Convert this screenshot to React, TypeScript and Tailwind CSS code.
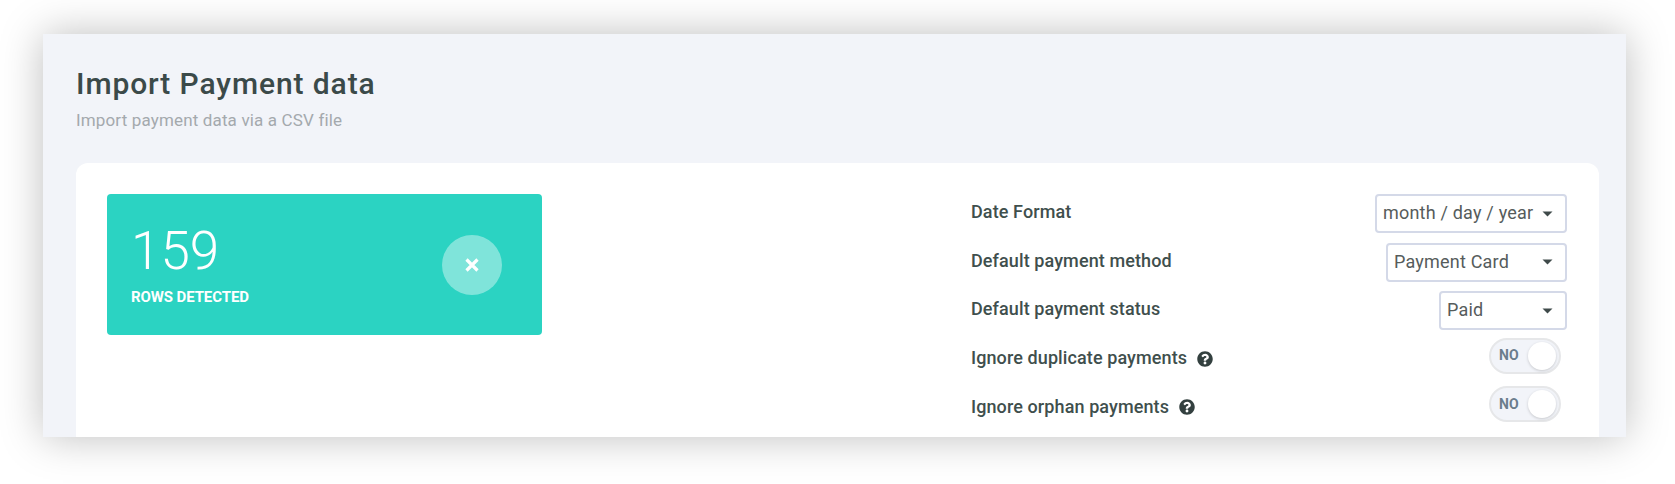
import React from "react";
import { FaQuestionCircle } from "react-icons/fa";

function Caret() {
  return (
    <svg width="11" height="6" viewBox="0 0 11 6" className="shrink-0">
      <path d="M0.5 0.5h10L5.5 5.5z" fill="#3f4a4a" />
    </svg>
  );
}

function Select({ label, width }: { label: string; width: string }) {
  return (
    <div className={`flex h-[39px] items-center justify-between rounded-[4px] border-2 border-[#d4d9e8] bg-white pl-[6px] pr-[12px] text-[18px] tracking-[0.2px] text-[#565c5c] ${width}`}>
      <span className="relative top-[-1px]">{label}</span>
      <Caret />
    </div>
  );
}

function Toggle() {
  return (
    <div className="mb-[8px] mr-[6px] flex h-[36px] w-[72px] items-center justify-between rounded-full border-2 border-[#e6e7e9] bg-[#f2f4f9] pl-[8px] pr-[3px]">
      <span className="text-[14px] font-bold text-[#6b7d8c]">NO</span>
      <span className="h-[28px] w-[28px] rounded-full bg-white shadow-[0_1px_3px_rgba(0,0,0,0.18)]" />
    </div>
  );
}

function Row({ label, help, children }: { label: string; help?: boolean; children: React.ReactNode }) {
  return (
    <div className="flex h-[39px] items-center justify-between">
      <div className="flex items-center gap-[10px] text-[18px] font-medium tracking-[0.1px] text-[#3f4f4d]">
        <span className="relative top-[-2px]">{label}</span>
        {help && <FaQuestionCircle className="relative top-[-1px] h-[16px] w-[16px] text-[#33403f]" />}
      </div>
      {children}
    </div>
  );
}

export default function App() {
  return (
    <div className="h-[484px] w-[1675px] overflow-hidden bg-white pl-[43px] pt-[34px] font-['Roboto',sans-serif]">
      <div className="h-[403px] w-[1583px] bg-[#f2f4f9] shadow-[0_0_40px_rgba(0,0,0,0.26)]">
        <div className="h-[403px] overflow-hidden pl-[33px] pr-[27px] pt-[31px]">
          <h1 className="text-[30px] font-medium leading-[38px] tracking-[0.9px] text-[#3b4a49]">Import Payment data</h1>
          <p className="mt-[6px] text-[17px] leading-[22px] tracking-[0.15px] text-[#a4a9ad]">Import payment data via a CSV file</p>
          <div className="mt-[32px] flex h-[400px] items-start justify-between rounded-[12px] bg-white pl-[31px] pr-[32px] pt-[31px]">
            <div className="flex h-[141px] w-[435px] items-center justify-between rounded-[4px] bg-[#2bd3c2] pl-[24px] pr-[40px]">
              <div className="text-white">
                <div className="text-[53px] font-light leading-[58px]">159</div>
                <div className="mt-[8px] text-[15px] font-bold leading-[19px] tracking-[-0.1px]">ROWS DETECTED</div>
              </div>
              <div className="flex h-[60px] w-[60px] items-center justify-center rounded-full bg-white/40">
                <svg width="16" height="16" viewBox="0 0 16 16">
                  <path d="M2.5 2.5l11 11M13.5 2.5l-11 11" stroke="#fff" strokeWidth="3.2" />
                </svg>
              </div>
            </div>
            <div className="flex w-[596px] flex-col gap-[9.7px]">
              <Row label="Date Format"><Select label="month / day / year" width="w-[192px]" /></Row>
              <Row label="Default payment method"><Select label="Payment Card" width="w-[181px]" /></Row>
              <Row label="Default payment status"><Select label="Paid" width="w-[128px]" /></Row>
              <Row label="Ignore duplicate payments" help><Toggle /></Row>
              <Row label="Ignore orphan payments" help><Toggle /></Row>
            </div>
          </div>
        </div>
      </div>
    </div>
  );
}
